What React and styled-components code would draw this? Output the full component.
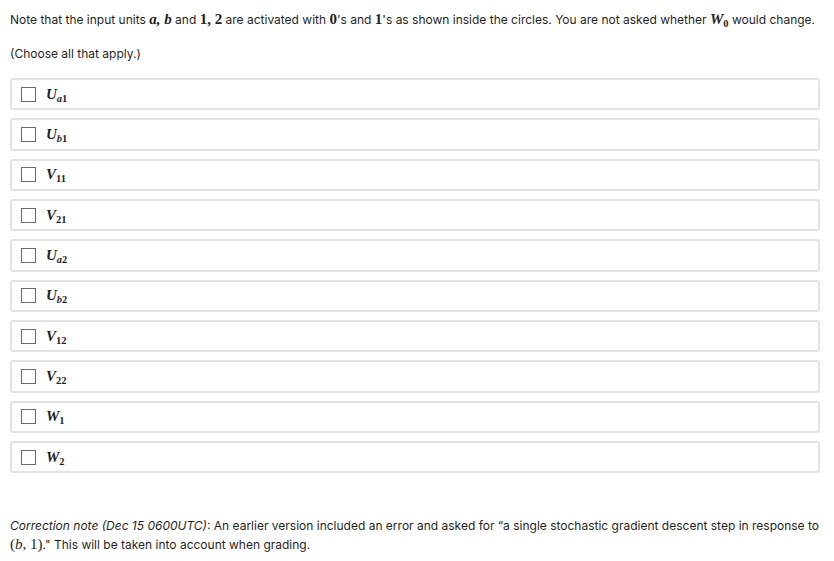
import styled, { createGlobalStyle } from 'styled-components';

const GlobalStyle = createGlobalStyle`
  html, body {
    margin: 0;
    background: #fff;
  }
  body {
    font-family: Inter, "Noto Sans", sans-serif;
    font-size: 12px;
    color: #1f1f1f;
  }
`;

const OPTIONS = [
  ['U', 'a', '1'],
  ['U', 'b', '1'],
  ['V', '', '11'],
  ['V', '', '21'],
  ['U', 'a', '2'],
  ['U', 'b', '2'],
  ['V', '', '12'],
  ['V', '', '22'],
  ['W', '', '1'],
  ['W', '', '2'],
];

const App = () => (
  <>
    <GlobalStyle />
    <Page>
      <Text>
        Note that the input units <M $bold>a, b</M> and <M $bold $upright>1, 2</M> are activated
        with <M $bold $upright>0</M>'s and <M $bold $upright>1</M>'s as shown inside the circles.
        You are not asked whether <M $bold>W<Sub>0</Sub></M> would change.
      </Text>
      <Hint>(Choose all that apply.)</Hint>
      <Options>
        {OPTIONS.map(([v, l, d]) => (
          <Option key={v + l + d}>
            <Box type="checkbox" />
            <M $bold>
              {v}
              <Sub>
                {l && <i>{l}</i>}
                {d}
              </Sub>
            </M>
          </Option>
        ))}
      </Options>
      <Note>
        <em>Correction note (Dec 15 0600UTC)</em>: An earlier version included an error and asked
        for “a single stochastic gradient descent step in response to{' '}
        <M $upright>(</M>
        <M>b</M>
        <M $upright>, 1)</M>." This will be taken into account when grading.
      </Note>
    </Page>
  </>
);

export default App;

const Page = styled.div`
  padding: 10px 14px 0 10px;
`;
const Text = styled.p`
  margin: 0;
  line-height: 19px;
`;
const Hint = styled.p`
  margin: 15px 0 0;
  line-height: 19px;
`;
const Options = styled.div`
  margin-top: 15px;
  display: flex;
  flex-direction: column;
  gap: 8px;
`;
const Option = styled.label`
  display: flex;
  align-items: center;
  gap: 10px;
  height: 32.35px;
  box-sizing: border-box;
  padding: 0 10px 0 9px;
  border: 2px solid #e3e3e3;
  border-radius: 3px;
`;
const Box = styled.input`
  appearance: none;
  margin: 0;
  width: 15px;
  height: 15px;
  border: 1px solid #6b6b6b;
  background: #fff;
  box-sizing: border-box;
`;
const M = styled.span`
  font-family: "Liberation Serif", "DejaVu Serif", serif;
  font-size: 15px;
  font-style: ${p => (p.$upright ? 'normal' : 'italic')};
  font-weight: ${p => (p.$bold ? 700 : 400)};
`;
const Sub = styled.sub`
  font-size: 10.5px;
  font-style: normal;
  vertical-align: -3px;
  line-height: 0;
  i {
    font-style: italic;
  }
`;
const Note = styled.p`
  margin: 43px 0 0;
  line-height: 19px;
  em {
    font-style: italic;
  }
`;
